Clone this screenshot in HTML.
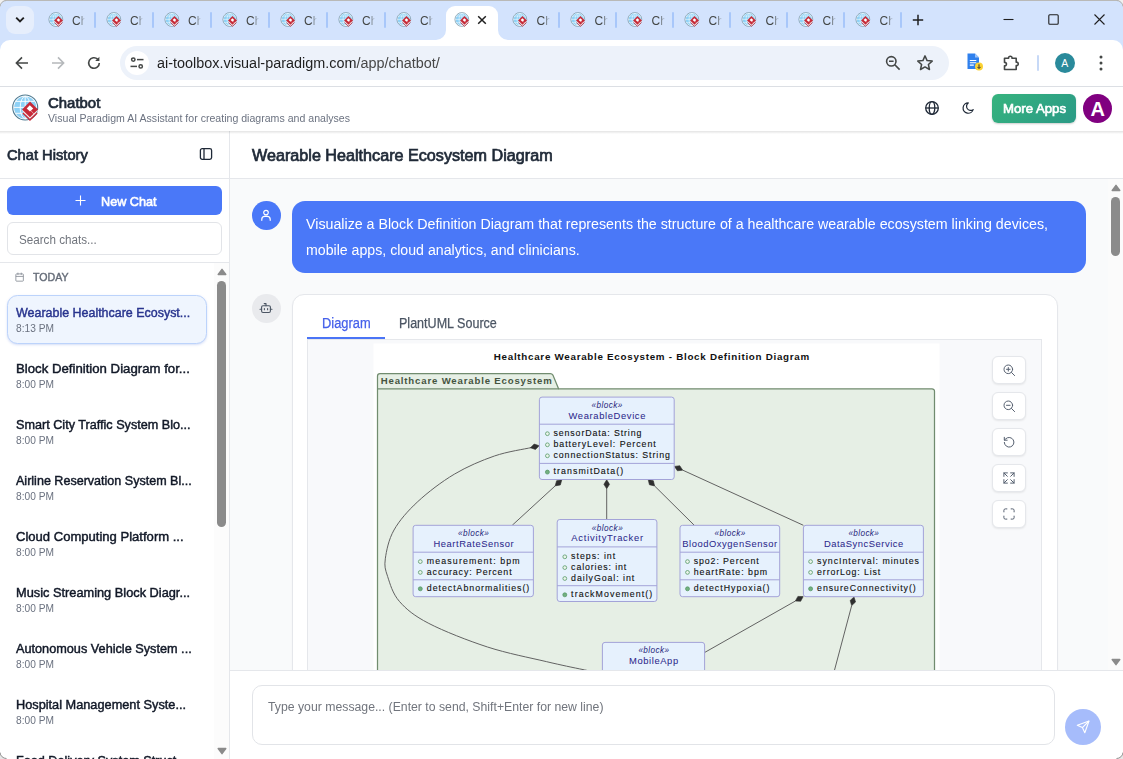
<!DOCTYPE html>
<html>
<head>
<meta charset="utf-8">
<title>Chatbot</title>
<style>
*{box-sizing:border-box;margin:0;padding:0}
html,body{width:1123px;height:759px;overflow:hidden;background:#fff}
body{font-family:"Liberation Sans",sans-serif;position:relative;color:#1f2937}
.abs{position:absolute}
.t{position:absolute;white-space:nowrap;line-height:1}
/* chrome */
#tabstrip{position:absolute;left:0;top:0;width:1123px;height:54px;background:#d3e3fd}
#toolbar{position:absolute;left:0;top:40px;width:1123px;height:46px;background:#fff;border-radius:10px 10px 0 0}
#tbline{position:absolute;left:0;top:86px;width:1123px;height:1px;background:#dcdfe4}
.sep{position:absolute;top:12px;width:2px;height:16px;background:#a8c7fa;border-radius:1px}
.tabtxt{position:absolute;top:13.800px;font-size:12px;line-height:14px;color:#444746;width:13px;overflow:hidden;white-space:nowrap;-webkit-mask-image:linear-gradient(90deg,#000 55%,transparent 100%);mask-image:linear-gradient(90deg,#000 55%,transparent 100%)}
.fav{position:absolute;top:12px;width:16px;height:16px}
#omni{position:absolute;left:120px;top:46px;width:829px;height:34px;border-radius:17px;background:#edf2fa}
/* app */
#apphdr{position:absolute;left:0;top:87px;width:1123px;height:43.500px;background:#fff}
#sidebar{position:absolute;left:0;top:131px;width:230px;height:628px;background:#fff;border-right:1px solid #e5e7eb}
#main{position:absolute;left:230px;top:131px;width:893px;height:628px;background:#f9fafb}
.item-t{position:absolute;left:16px;font-size:13px;font-weight:bold;color:#111827;white-space:nowrap;line-height:1}
.item-s{position:absolute;left:16px;font-size:10.5px;color:#6b7280;white-space:nowrap;line-height:1}
</style>
</head>
<body>
<svg width="0" height="0" style="position:absolute">
<defs>
<symbol id="fav" viewBox="0 0 29 29">
  <circle cx="14.2" cy="13.55" r="12.5" fill="#fff" stroke="#4f7a90" stroke-width="1.1"/>
  <circle cx="14.2" cy="13.55" r="11.1" fill="#8ed1f6"/>
  <g stroke="#fff" stroke-width="0.9" fill="none">
    <ellipse cx="14.2" cy="13.55" rx="5" ry="11.1"/>
    <path d="M14.2 2.4v22.300M3 13.400h22.400M4.800 7.400h18.800M4.800 19.300h18.800"/>
  </g>
  <path d="M11.900 19 18.970 25.800 26.100 19" fill="none" stroke="#c62a38" stroke-width="1.6"/>
  <path d="M18.970 9.040 27.040 16.800 18.970 24.400 11.060 16.800z" fill="#fbeff0"/>
  <path d="M18.970 7.400 27.040 15.400 18.970 23.200 11.060 15.400z" fill="#c62a38"/>
  <path d="M15.700 14.400 18.800 11.200 22.200 14.400 19 17.600z" fill="#fff"/>
  <path d="M19.600 16.300 22.900 20" stroke="#fff" stroke-width="0.5"/>
</symbol>
</defs>
</svg>
<!-- ============ CHROME ============ -->
<div id="tabstrip">
<div class="abs" style="left:6px;top:6px;width:28px;height:28px;border-radius:9px;background:#e6eefc"></div>
<svg class="abs" style="left:14px;top:15px" width="12" height="10" viewBox="0 0 12 10"><path d="M2.2 2.6 6 6.4 9.8 2.6" fill="none" stroke="#1f1f1f" stroke-width="1.9"/></svg>
<svg class="fav" style="left:47.6px"><use href="#fav"/></svg>
<div class="tabtxt" style="left:72px">Ch</div>
<svg class="fav" style="left:105.6px"><use href="#fav"/></svg>
<div class="tabtxt" style="left:130px">Ch</div>
<svg class="fav" style="left:163.6px"><use href="#fav"/></svg>
<div class="tabtxt" style="left:188px">Ch</div>
<svg class="fav" style="left:221.6px"><use href="#fav"/></svg>
<div class="tabtxt" style="left:246px">Ch</div>
<svg class="fav" style="left:279.6px"><use href="#fav"/></svg>
<div class="tabtxt" style="left:304px">Ch</div>
<svg class="fav" style="left:337.6px"><use href="#fav"/></svg>
<div class="tabtxt" style="left:362px">Ch</div>
<svg class="fav" style="left:395.6px"><use href="#fav"/></svg>
<div class="tabtxt" style="left:420px">Ch</div>
<svg class="fav" style="left:512.1px"><use href="#fav"/></svg>
<div class="tabtxt" style="left:536.5px">Ch</div>
<svg class="fav" style="left:570.1px"><use href="#fav"/></svg>
<div class="tabtxt" style="left:594.5px">Ch</div>
<svg class="fav" style="left:627.1px"><use href="#fav"/></svg>
<div class="tabtxt" style="left:651.5px">Ch</div>
<svg class="fav" style="left:684.1px"><use href="#fav"/></svg>
<div class="tabtxt" style="left:708.5px">Ch</div>
<svg class="fav" style="left:741.1px"><use href="#fav"/></svg>
<div class="tabtxt" style="left:765.5px">Ch</div>
<svg class="fav" style="left:798.1px"><use href="#fav"/></svg>
<div class="tabtxt" style="left:822.5px">Ch</div>
<svg class="fav" style="left:855.1px"><use href="#fav"/></svg>
<div class="tabtxt" style="left:879.5px">Ch</div>
<div class="sep" style="left:94px"></div>
<div class="sep" style="left:152px"></div>
<div class="sep" style="left:210px"></div>
<div class="sep" style="left:268px"></div>
<div class="sep" style="left:326px"></div>
<div class="sep" style="left:384px"></div>
<div class="sep" style="left:558px"></div>
<div class="sep" style="left:615px"></div>
<div class="sep" style="left:672px"></div>
<div class="sep" style="left:729px"></div>
<div class="sep" style="left:786px"></div>
<div class="sep" style="left:843px"></div>
<div class="sep" style="left:900px"></div>
<div class="abs" style="left:446px;top:6px;width:52px;height:34px;background:#fff;border-radius:9px 9px 0 0"></div>
<svg class="abs" style="left:436px;top:30px" width="10" height="10" viewBox="0 0 10 10"><path d="M10 0V10H0A10 10 0 0 0 10 0z" fill="#fff"/></svg>
<svg class="abs" style="left:498px;top:30px" width="10" height="10" viewBox="0 0 10 10"><path d="M0 0V10H10A10 10 0 0 1 0 0z" fill="#fff"/></svg>
<svg class="fav" style="left:453.600px"><use href="#fav"/></svg>
<svg class="abs" style="left:477px;top:15px" width="10" height="10" viewBox="0 0 10 10"><path d="M1.2 1.2 8.8 8.8M8.8 1.2 1.2 8.8" stroke="#1f1f1f" stroke-width="1.5" fill="none"/></svg>
<svg class="abs" style="left:912px;top:14px" width="12" height="12" viewBox="0 0 12 12"><path d="M6 .8v10.4M.8 6h10.4" stroke="#1f1f1f" stroke-width="1.5" fill="none"/></svg>
<svg class="abs" style="left:1003px;top:14px" width="11" height="11" viewBox="0 0 11 11"><path d="M.5 5.5h10" stroke="#1f1f1f" stroke-width="1.1"/></svg>
<svg class="abs" style="left:1048px;top:14px" width="11" height="11" viewBox="0 0 11 11"><rect x=".8" y=".8" width="9.4" height="9.4" rx="1" fill="none" stroke="#1f1f1f" stroke-width="1.1"/></svg>
<svg class="abs" style="left:1094px;top:14px" width="11" height="11" viewBox="0 0 11 11"><path d="M.5.5l10 10M10.500 .5l-10 10" stroke="#1f1f1f" stroke-width="1.1" fill="none"/></svg>
</div>
<div id="toolbar"></div><div id="tbline"></div>
<svg class="abs" style="left:14px;top:55px" width="16" height="16" viewBox="0 0 16 16"><path d="M14 8H2.6M8 2.4 2.4 8 8 13.600" fill="none" stroke="#444746" stroke-width="1.6"/></svg>
<svg class="abs" style="left:50px;top:55px" width="16" height="16" viewBox="0 0 16 16"><path d="M2 8h11.400M8 2.400 13.600 8 8 13.600" fill="none" stroke="#b5b8bb" stroke-width="1.6"/></svg>
<svg class="abs" style="left:86px;top:55px" width="16" height="16" viewBox="0 0 16 16"><path d="M13.300 8A5.300 5.300 0 1 1 11.600 4.100" fill="none" stroke="#444746" stroke-width="1.6"/><path d="M13.400 1.800v4.200H9.200z" fill="#444746"/></svg>
<div id="omni"></div>
<div class="abs" style="left:125px;top:51px;width:24px;height:24px;border-radius:12px;background:#fff"></div>
<svg class="abs" style="left:129px;top:55px" width="16" height="16" viewBox="0 0 16 16"><g fill="none" stroke="#444746" stroke-width="1.5"><circle cx="4.300" cy="4.600" r="1.700"/><path d="M8 4.600h6.500"/><circle cx="11.700" cy="11.400" r="1.700"/><path d="M1.500 11.400H8"/></g></svg>
<div class="t" id="url" style="left:156.8px;top:56.20px;font-size:14px;transform:scaleX(1.0294);transform-origin:0 50%;color:#1f1f1f;">ai-toolbox.visual-paradigm.com<span style="color:#474747">/app/chatbot/</span></div>
<svg class="abs" style="left:884px;top:54px" width="18" height="18" viewBox="0 0 18 18"><g fill="none" stroke="#444746" stroke-width="1.6"><circle cx="7.300" cy="7.300" r="4.700"/><path d="M10.800 10.800 15.600 15.600M5 7.300h4.600"/></g></svg>
<svg class="abs" style="left:916px;top:53.700px" width="18" height="18" viewBox="0 0 18 18"><path d="M9 1.900l2.100 4.700 5.100.5-3.800 3.400 1.100 5L9 12.900 4.500 15.500l1.100-5L1.800 7.100l5.100-.5z" fill="none" stroke="#444746" stroke-width="1.5" stroke-linejoin="round"/></svg>
<svg class="abs" style="left:965px;top:52px" width="20" height="20" viewBox="0 0 20 20"><path d="M2.500 1.500h7.500l4 4v11.500h-11.500z" fill="#2f80ed"/><path d="M10 1.500v4h4z" fill="#9cc2f7"/><path d="M4.800 8.500h6.500M4.800 10.800h6.500M4.800 13.100h4" stroke="#fff" stroke-width="1.100"/><circle cx="14" cy="14.500" r="4" fill="#fbd234"/><path d="M14 12.300v4M12.400 14.900l1.600 1.600 1.600-1.600" fill="none" stroke="#333" stroke-width="1"/></svg>
<svg class="abs" style="left:1002px;top:53px" width="19" height="19" viewBox="0 0 19 19"><path d="M2.500 5.200h4.100c-.5-2.600 3.900-2.600 3.400 0h4.200v4c2.700-.5 2.700 3.900 0 3.400v3.900H2.500v-3.700c2.600.4 2.600-3.800 0-3.400z" fill="none" stroke="#444746" stroke-width="1.6" stroke-linejoin="round"/></svg>
<div class="abs" style="left:1037px;top:55px;width:2px;height:16px;background:#c7d9f7;border-radius:1px"></div>
<div class="abs" style="left:1055px;top:53px;width:20px;height:20px;border-radius:10px;background:#2a8a9b"></div>
<div class="t" style="left:1061.300px;top:57.500px;font-size:10.500px;color:#fff">A</div>
<svg class="abs" style="left:1099px;top:54px" width="4" height="18" viewBox="0 0 4 18"><circle cx="2" cy="3" r="1.500" fill="#444746"/><circle cx="2" cy="9" r="1.500" fill="#444746"/><circle cx="2" cy="15" r="1.500" fill="#444746"/></svg>
<div class="abs" style="left:0;top:0;width:1123px;height:1px;background:#b9b9b7"></div>
<svg class="abs" style="left:0;top:0" width="7" height="7" viewBox="0 0 7 7"><path d="M0 0h7A7 7 0 0 0 0 7z" fill="#f0f0f0"/><path d="M0 6.500A6.500 6.500 0 0 1 6.500 .500" fill="none" stroke="#b0b0ae" stroke-width="1"/></svg>
<svg class="abs" style="left:1116px;top:0" width="7" height="7" viewBox="0 0 7 7"><path d="M7 0H0A7 7 0 0 1 7 7z" fill="#f0f0f0"/><path d="M7 6.500A6.500 6.500 0 0 0 .500 .500" fill="none" stroke="#b0b0ae" stroke-width="1"/></svg>
<!-- ============ APP HEADER ============ -->
<div id="sidebar"></div>
<div id="main"></div>
<div id="apphdr"></div>
<svg class="abs" style="left:11px;top:94px" width="29" height="29"><use href="#fav"/></svg>
<div class="t" id="h_title" style="left:48px;top:95.75px;font-size:14.5px;transform:scaleX(1.0296);transform-origin:0 50%;-webkit-text-stroke:0.700px #1f2937;color:#1f2937;">Chatbot</div>
<div class="t" id="h_sub" style="left:48px;top:112.95px;font-size:10.5px;transform:scaleX(1.0073);transform-origin:0 50%;color:#6b7280;">Visual Paradigm AI Assistant for creating diagrams and analyses</div>
<svg class="abs" style="left:924px;top:100px" width="16" height="16" viewBox="0 0 16 16"><g fill="none" stroke="#1f2937" stroke-width="1.300"><circle cx="8" cy="8" r="6.300"/><ellipse cx="8" cy="8" rx="2.800" ry="6.300"/><path d="M1.700 8h12.600"/></g></svg>
<svg class="abs" style="left:961px;top:101.200px" width="14" height="14" viewBox="0 0 16 16"><path d="M8.300 2.200a5.900 5.900 0 1 0 5.600 7.700 4.700 4.700 0 0 1-5.600-7.700z" fill="none" stroke="#1f2937" stroke-width="1.400" stroke-linejoin="round"/></svg>
<div class="abs" style="left:992px;top:94px;width:84px;height:29px;border-radius:6px;background:linear-gradient(135deg,#36b37e,#2b9a86);box-shadow:0 1px 2px rgba(0,0,0,.2)"></div>
<div class="t" id="moreapps" style="left:1002.5px;top:102.00px;font-size:13px;transform:scaleX(1.0136);transform-origin:0 50%;-webkit-text-stroke:0.650px #fff;color:#fff;">More Apps</div>
<div class="abs" style="left:1083px;top:94px;width:29px;height:29px;border-radius:15px;background:#800080"></div>
<div class="t" style="left:1090.500px;top:98.500px;font-size:20px;font-weight:bold;color:#fff">A</div>
<!-- ============ SIDEBAR ============ -->
<div class="t" id="sb_title" style="left:7.4px;top:147.10px;font-size:15px;transform:scaleX(0.9790);transform-origin:0 50%;-webkit-text-stroke:0.700px #1f2937;color:#1f2937;">Chat History</div>
<svg class="abs" style="left:199px;top:147px" width="14" height="14" viewBox="0 0 14 14"><rect x="1.400" y="1.600" width="11.200" height="10.800" rx="1.800" fill="none" stroke="#1f2937" stroke-width="1.300"/><path d="M5 1.600v10.800" stroke="#1f2937" stroke-width="1.300"/></svg>
<div class="abs" style="left:0;top:178px;width:229px;height:1px;background:#e5e7eb"></div>
<div class="abs" style="left:7px;top:186px;width:215px;height:29px;border-radius:6px;background:#4a78f8"></div>
<svg class="abs" style="left:75px;top:195px" width="11" height="11" viewBox="0 0 11 11"><path d="M5.500 .500v10M.500 5.500h10" stroke="#fff" stroke-width="1.100"/></svg>
<div class="t" id="newchat" style="left:100.5px;top:194.80px;font-size:13px;transform:scaleX(0.9724);transform-origin:0 50%;-webkit-text-stroke:0.600px #fff;color:#fff;">New Chat</div>
<div class="abs" style="left:7px;top:222px;width:215px;height:33px;border-radius:6px;background:#fff;border:1px solid #e2e4e8"></div>
<div class="t" id="search" style="left:19px;top:233.85px;font-size:12.5px;transform:scaleX(0.9319);transform-origin:0 50%;color:#71757d;">Search chats...</div>
<div class="abs" style="left:0;top:262px;width:229px;height:1px;background:#e5e7eb"></div>
<svg class="abs" style="left:14.500px;top:272px" width="9.200" height="10" viewBox="0 0 11 12"><g fill="none" stroke="#7f858f" stroke-width="0.950"><rect x="1" y="2.300" width="9" height="8.700" rx="0.800"/><path d="M1 5.300h9M3.500 .800v2.600M7.500 .800v2.600"/></g></svg>
<div class="t" id="today" style="left:32.7px;top:271.50px;font-size:11px;transform:scaleX(0.9650);transform-origin:0 50%;color:#656c78;-webkit-text-stroke:0.400px #656c78;">TODAY</div>
<div class="abs" style="left:7px;top:295px;width:200px;height:49px;border-radius:10.500px;background:#eff5fe;border:1px solid #bcd3fb;box-shadow:0 1px 2.500px rgba(60,100,220,.22)"></div>
<div class="t" id="it0" style="left:15.6px;top:306.00px;font-size:13px;transform:scaleX(0.9580);transform-origin:0 50%;-webkit-text-stroke:0.450px #28348e;color:#28348e;">Wearable Healthcare Ecosyst...</div>
<div class="t" id="tm0" style="left:15.6px;top:322.95px;font-size:10.5px;transform:scaleX(0.9691);transform-origin:0 50%;color:#6b7280;">8:13 PM</div>
<div class="t" id="it1" style="left:15.6px;top:362.00px;font-size:13px;transform:scaleX(1.0150);transform-origin:0 50%;-webkit-text-stroke:0.450px #111827;color:#111827;">Block Definition Diagram for...</div>
<div class="t" id="tm1" style="left:15.6px;top:378.95px;font-size:10.5px;transform:scaleX(0.9691);transform-origin:0 50%;color:#6b7280;">8:00 PM</div>
<div class="t" id="it2" style="left:15.6px;top:418.00px;font-size:13px;transform:scaleX(0.9719);transform-origin:0 50%;-webkit-text-stroke:0.450px #111827;color:#111827;">Smart City Traffic System Blo...</div>
<div class="t" id="tm2" style="left:15.6px;top:434.95px;font-size:10.5px;transform:scaleX(0.9691);transform-origin:0 50%;color:#6b7280;">8:00 PM</div>
<div class="t" id="it3" style="left:15.6px;top:474.00px;font-size:13px;transform:scaleX(0.9650);transform-origin:0 50%;-webkit-text-stroke:0.450px #111827;color:#111827;">Airline Reservation System Bl...</div>
<div class="t" id="tm3" style="left:15.6px;top:490.95px;font-size:10.5px;transform:scaleX(0.9691);transform-origin:0 50%;color:#6b7280;">8:00 PM</div>
<div class="t" id="it4" style="left:15.6px;top:530.00px;font-size:13px;transform:scaleX(1.0042);transform-origin:0 50%;-webkit-text-stroke:0.450px #111827;color:#111827;">Cloud Computing Platform ...</div>
<div class="t" id="tm4" style="left:15.6px;top:546.95px;font-size:10.5px;transform:scaleX(0.9691);transform-origin:0 50%;color:#6b7280;">8:00 PM</div>
<div class="t" id="it5" style="left:15.6px;top:586.00px;font-size:13px;transform:scaleX(0.9835);transform-origin:0 50%;-webkit-text-stroke:0.450px #111827;color:#111827;">Music Streaming Block Diagr...</div>
<div class="t" id="tm5" style="left:15.6px;top:602.95px;font-size:10.5px;transform:scaleX(0.9691);transform-origin:0 50%;color:#6b7280;">8:00 PM</div>
<div class="t" id="it6" style="left:15.6px;top:642.00px;font-size:13px;transform:scaleX(0.9765);transform-origin:0 50%;-webkit-text-stroke:0.450px #111827;color:#111827;">Autonomous Vehicle System ...</div>
<div class="t" id="tm6" style="left:15.6px;top:658.95px;font-size:10.5px;transform:scaleX(0.9691);transform-origin:0 50%;color:#6b7280;">8:00 PM</div>
<div class="t" id="it7" style="left:15.6px;top:698.00px;font-size:13px;transform:scaleX(0.9803);transform-origin:0 50%;-webkit-text-stroke:0.450px #111827;color:#111827;">Hospital Management Syste...</div>
<div class="t" id="tm7" style="left:15.6px;top:714.95px;font-size:10.5px;transform:scaleX(0.9691);transform-origin:0 50%;color:#6b7280;">8:00 PM</div>
<div class="t" id="it8" style="left:15.6px;top:754.00px;font-size:13px;transform:scaleX(0.9734);transform-origin:0 50%;-webkit-text-stroke:0.450px #111827;color:#111827;">Food Delivery System Struct...</div>
<div class="t" id="tm8" style="left:15.6px;top:770.95px;font-size:10.5px;transform:scaleX(0.9691);transform-origin:0 50%;color:#6b7280;">8:00 PM</div>
<div class="abs" style="left:214px;top:263px;width:15px;height:496px;background:#fcfcfc"></div>
<svg class="abs" style="left:216.500px;top:267.500px" width="10" height="8" viewBox="0 0 10 8"><path d="M5 1.300 8.800 6.500H1.200z" fill="#8b8b8b" stroke="#8b8b8b" stroke-width="1.400" stroke-linejoin="round"/></svg>
<div class="abs" style="left:217px;top:281px;width:9px;height:246px;border-radius:4.500px;background:#8b8b8b"></div>
<svg class="abs" style="left:216.500px;top:747px" width="10" height="8" viewBox="0 0 10 8"><path d="M5 6.700 8.800 1.500H1.200z" fill="#8b8b8b" stroke="#8b8b8b" stroke-width="1.400" stroke-linejoin="round"/></svg>
<!-- ============ MAIN ============ -->
<div class="abs" style="left:230px;top:131px;width:893px;height:47px;background:#fff"></div>
<div class="abs" style="left:230px;top:178px;width:893px;height:1px;background:#e5e7eb"></div>
<div class="t" id="m_title" style="left:252px;top:147.70px;font-size:15.6px;transform:scaleX(1.0364);transform-origin:0 50%;-webkit-text-stroke:0.700px #1f2937;color:#1f2937;">Wearable Healthcare Ecosystem Diagram</div>
<div class="abs" style="left:252px;top:200.800px;width:28.800px;height:28.800px;border-radius:50%;background:#4a78f8"></div>
<svg class="abs" style="left:259.400px;top:208.200px" width="14" height="14" viewBox="0 0 14 14"><g fill="none" stroke="#fff" stroke-width="1.200" stroke-linecap="round"><circle cx="7" cy="4.600" r="2.300"/><path d="M2.800 12.300v-1a3 3 0 0 1 3-3h2.400a3 3 0 0 1 3 3v1"/></g></svg>
<div class="abs" style="left:292px;top:201px;width:794px;height:71.700px;border-radius:13px;background:#4a78f8"></div>
<div class="t" id="u1" style="left:306.1px;top:218.10px;font-size:13.8px;transform:scaleX(1.0308);transform-origin:0 50%;color:#fff;">Visualize a Block Definition Diagram that represents the structure of a healthcare wearable ecosystem linking devices,</div>
<div class="t" id="u2" style="left:306.1px;top:244.10px;font-size:13.8px;transform:scaleX(1.0255);transform-origin:0 50%;color:#fff;">mobile apps, cloud analytics, and clinicians.</div>
<div class="abs" style="left:252px;top:293.800px;width:28.800px;height:28.800px;border-radius:50%;background:#e9eaed"></div>
<svg class="abs" style="left:259.400px;top:301.200px" width="14" height="14" viewBox="0 0 14 14"><g fill="none" stroke="#4b5563" stroke-width="1.100" stroke-linecap="round" stroke-linejoin="round"><rect x="2.600" y="4.700" width="8.800" height="6.800" rx="1.400"/><path d="M7 4.700V2.600H5.200M1 8.200h1.600M11.400 8.200H13M5.400 7.600v1.200M8.600 7.600v1.200"/></g></svg>
<div class="abs" style="left:292px;top:294px;width:766px;height:400px;border-radius:12px;background:#fff;border:1px solid #e5e7eb;box-shadow:0 1px 2px rgba(0,0,0,.04)"></div>
<div class="t" id="tab1" style="left:321.7px;top:315.50px;font-size:14px;transform:scaleX(0.9186);transform-origin:0 50%;color:#4560ea;-webkit-text-stroke:0.250px #4560ea;">Diagram</div>
<div class="t" id="tab2" style="left:399.2px;top:316.00px;font-size:14px;transform:scaleX(0.8956);transform-origin:0 50%;color:#4b5563;-webkit-text-stroke:0.250px #4b5563;">PlantUML Source</div>
<div class="abs" style="left:307px;top:339px;width:735px;height:1px;background:#e5e7eb"></div>
<div class="abs" style="left:307px;top:337.200px;width:78px;height:1.800px;background:#4a74f6"></div>
<div class="abs" style="left:307px;top:340px;width:735px;height:340px;background:#f8f9fb;border:1px solid #e5e7eb;border-top:0"></div>
<!-- ============ DIAGRAM ============ -->
<svg class="abs" style="left:308px;top:340px" width="733" height="330" viewBox="308 340 733 330" font-family="Liberation Sans, sans-serif">
<rect x="373.5" y="343.5" width="566" height="340" fill="#fff"/>
<text x="493.80" y="360.03" font-size="9.8" fill="#111" stroke="#111" stroke-width="0" textLength="315.40" lengthAdjust="spacing" font-weight="bold">Healthcare Wearable Ecosystem - Block Definition Diagram</text>
<path d="M377.5 388.8V376.1a2.500 2.500 0 0 1 2.500-2.500H550.300a3 3 0 0 1 2.600 1.500L558.600 388.800H932a2.500 2.500 0 0 1 2.500 2.500V700H377.500z" fill="#e6efe5" stroke="#718c6f" stroke-width="1.250"/>
<path d="M377.5 388.8H558.600" stroke="#718c6f" stroke-width="1.250"/>
<text x="380.70" y="384.16" font-size="9.6" fill="#45543f" stroke="#45543f" stroke-width="0" textLength="171.00" lengthAdjust="spacing" font-weight="bold">Healthcare Wearable Ecosystem</text>
<path d="M555.17 485.88L512.20 525.30" stroke="#626262" stroke-width="1" fill="none"/>
<polygon points="561.80,479.80 556.59,480.78 555.17,485.88 560.38,484.91" fill="#2f2f2f" stroke="#2f2f2f" stroke-width="0.600"/>
<path d="M606.70 488.80L606.70 519.50" stroke="#626262" stroke-width="1" fill="none"/>
<polygon points="606.70,479.80 603.90,484.30 606.70,488.80 609.50,484.30" fill="#2f2f2f" stroke="#2f2f2f" stroke-width="0.600"/>
<path d="M654.59 485.94L694.30 525.30" stroke="#626262" stroke-width="1" fill="none"/>
<polygon points="648.20,479.60 649.42,484.76 654.59,485.94 653.37,480.78" fill="#2f2f2f" stroke="#2f2f2f" stroke-width="0.600"/>
<path d="M682.69 470.14L803.40 525.30" stroke="#626262" stroke-width="1" fill="none"/>
<polygon points="674.50,466.40 677.43,470.82 682.69,470.14 679.76,465.72" fill="#2f2f2f" stroke="#2f2f2f" stroke-width="0.600"/>
<path d="M795.37 601.04L704.60 652.50" stroke="#626262" stroke-width="1" fill="none"/>
<polygon points="803.20,596.60 797.90,596.38 795.37,601.04 800.67,601.26" fill="#2f2f2f" stroke="#2f2f2f" stroke-width="0.600"/>
<path d="M851.68 605.60L834.00 672.00" stroke="#626262" stroke-width="1" fill="none"/>
<polygon points="854.00,596.90 850.14,600.53 851.68,605.60 855.55,601.97" fill="#2f2f2f" stroke="#2f2f2f" stroke-width="0.600"/>
<path d="M531.20 447.60C525.07 449.00 507.22 451.57 494.40 456.00C481.58 460.43 467.07 466.60 454.30 474.20C441.53 481.80 427.85 492.30 417.80 501.60C407.75 510.90 399.42 520.47 394.00 530.00C388.58 539.53 386.37 551.07 385.30 558.80C384.23 566.53 385.25 569.30 387.60 576.40C389.95 583.50 392.53 593.57 399.40 601.40C406.27 609.23 414.12 615.80 428.80 623.40C443.48 631.00 467.92 640.63 487.50 647.00C507.08 653.37 530.13 657.78 546.30 661.60C562.47 665.42 571.38 667.17 584.50 669.90C597.62 672.63 618.25 676.65 625.00 678.00" stroke="#626262" stroke-width="1" fill="none"/>
<polygon points="539.20,445.70 534.17,444.02 530.44,447.78 535.47,449.46" fill="#2f2f2f" stroke="#2f2f2f" stroke-width="0.600"/>
<rect x="539.4" y="397.1" width="134.80" height="82.40" rx="2.600" fill="#e6f1fd" stroke="#a3a3d8" stroke-width="1"/>
<path d="M539.4 424.2H674.2" stroke="#a3a3d8" stroke-width="1"/>
<path d="M539.4 463.4H674.2" stroke="#a3a3d8" stroke-width="1"/>
<text x="591.50" y="407.99" font-size="8.2" fill="#26267a" stroke="#26267a" stroke-width="0" textLength="30.80" lengthAdjust="spacing" font-style="italic">&#171;block&#187;</text>
<text x="568.50" y="418.80" font-size="9.4" fill="#2e2a8c" stroke="#2e2a8c" stroke-width="0.05" textLength="76.90" lengthAdjust="spacing" >WearableDevice</text>
<text x="553.50" y="435.99" font-size="8.8" fill="#111" stroke="#111" stroke-width="0.12" textLength="87.90" lengthAdjust="spacing" >sensorData: String</text>
<circle cx="547.4" cy="433.70" r="1.900" fill="#eaf4ea" stroke="#4f9460" stroke-width="0.750"/>
<text x="553.50" y="447.09" font-size="8.8" fill="#111" stroke="#111" stroke-width="0.12" textLength="102.20" lengthAdjust="spacing" >batteryLevel: Percent</text>
<circle cx="547.4" cy="444.80" r="1.900" fill="#eaf4ea" stroke="#4f9460" stroke-width="0.750"/>
<text x="553.50" y="458.09" font-size="8.8" fill="#111" stroke="#111" stroke-width="0.12" textLength="116.40" lengthAdjust="spacing" >connectionStatus: String</text>
<circle cx="547.4" cy="455.80" r="1.900" fill="#eaf4ea" stroke="#4f9460" stroke-width="0.750"/>
<text x="553.50" y="474.19" font-size="8.8" fill="#111" stroke="#111" stroke-width="0.12" textLength="69.80" lengthAdjust="spacing" >transmitData()</text>
<circle cx="547.4" cy="472.10" r="2" fill="#73b081" stroke="#4f9460" stroke-width="0.700"/>
<rect x="413.1" y="525.3" width="120.30" height="71.40" rx="2.600" fill="#e6f1fd" stroke="#a3a3d8" stroke-width="1"/>
<path d="M413.1 552.2H533.4" stroke="#a3a3d8" stroke-width="1"/>
<path d="M413.1 579.8H533.4" stroke="#a3a3d8" stroke-width="1"/>
<text x="458.00" y="536.29" font-size="8.2" fill="#26267a" stroke="#26267a" stroke-width="0" textLength="30.80" lengthAdjust="spacing" font-style="italic">&#171;block&#187;</text>
<text x="433.40" y="547.10" font-size="9.4" fill="#2e2a8c" stroke="#2e2a8c" stroke-width="0.05" textLength="80.30" lengthAdjust="spacing" >HeartRateSensor</text>
<text x="426.80" y="563.89" font-size="8.8" fill="#111" stroke="#111" stroke-width="0.12" textLength="92.90" lengthAdjust="spacing" >measurement: bpm</text>
<circle cx="420.3" cy="561.60" r="1.900" fill="#eaf4ea" stroke="#4f9460" stroke-width="0.750"/>
<text x="426.80" y="574.69" font-size="8.8" fill="#111" stroke="#111" stroke-width="0.12" textLength="84.80" lengthAdjust="spacing" >accuracy: Percent</text>
<circle cx="420.3" cy="572.40" r="1.900" fill="#eaf4ea" stroke="#4f9460" stroke-width="0.750"/>
<text x="426.80" y="590.89" font-size="8.8" fill="#111" stroke="#111" stroke-width="0.12" textLength="102.50" lengthAdjust="spacing" >detectAbnormalities()</text>
<circle cx="420.3" cy="588.80" r="2" fill="#73b081" stroke="#4f9460" stroke-width="0.700"/>
<rect x="557.2" y="519.5" width="99.70" height="82.00" rx="2.600" fill="#e6f1fd" stroke="#a3a3d8" stroke-width="1"/>
<path d="M557.2 546.9H656.9" stroke="#a3a3d8" stroke-width="1"/>
<path d="M557.2 585.7H656.9" stroke="#a3a3d8" stroke-width="1"/>
<text x="591.80" y="531.19" font-size="8.2" fill="#26267a" stroke="#26267a" stroke-width="0" textLength="30.90" lengthAdjust="spacing" font-style="italic">&#171;block&#187;</text>
<text x="571.30" y="541.10" font-size="9.4" fill="#2e2a8c" stroke="#2e2a8c" stroke-width="0.05" textLength="71.80" lengthAdjust="spacing" >ActivityTracker</text>
<text x="571.10" y="559.09" font-size="8.8" fill="#111" stroke="#111" stroke-width="0.12" textLength="44.10" lengthAdjust="spacing" >steps: int</text>
<circle cx="564.8" cy="556.80" r="1.900" fill="#eaf4ea" stroke="#4f9460" stroke-width="0.750"/>
<text x="571.10" y="569.89" font-size="8.8" fill="#111" stroke="#111" stroke-width="0.12" textLength="55.20" lengthAdjust="spacing" >calories: int</text>
<circle cx="564.8" cy="567.60" r="1.900" fill="#eaf4ea" stroke="#4f9460" stroke-width="0.750"/>
<text x="571.10" y="580.79" font-size="8.8" fill="#111" stroke="#111" stroke-width="0.12" textLength="63.10" lengthAdjust="spacing" >dailyGoal: int</text>
<circle cx="564.8" cy="578.50" r="1.900" fill="#eaf4ea" stroke="#4f9460" stroke-width="0.750"/>
<text x="571.10" y="596.89" font-size="8.8" fill="#111" stroke="#111" stroke-width="0.12" textLength="81.20" lengthAdjust="spacing" >trackMovement()</text>
<circle cx="564.8" cy="594.80" r="2" fill="#73b081" stroke="#4f9460" stroke-width="0.700"/>
<rect x="680" y="525.3" width="99.70" height="71.40" rx="2.600" fill="#e6f1fd" stroke="#a3a3d8" stroke-width="1"/>
<path d="M680 552.2H779.7" stroke="#a3a3d8" stroke-width="1"/>
<path d="M680 579.8H779.7" stroke="#a3a3d8" stroke-width="1"/>
<text x="714.60" y="536.29" font-size="8.2" fill="#26267a" stroke="#26267a" stroke-width="0" textLength="30.60" lengthAdjust="spacing" font-style="italic">&#171;block&#187;</text>
<text x="682.20" y="547.10" font-size="9.4" fill="#2e2a8c" stroke="#2e2a8c" stroke-width="0.05" textLength="95.00" lengthAdjust="spacing" >BloodOxygenSensor</text>
<text x="693.70" y="563.89" font-size="8.8" fill="#111" stroke="#111" stroke-width="0.12" textLength="65.10" lengthAdjust="spacing" >spo2: Percent</text>
<circle cx="687.5" cy="561.60" r="1.900" fill="#eaf4ea" stroke="#4f9460" stroke-width="0.750"/>
<text x="693.70" y="574.69" font-size="8.8" fill="#111" stroke="#111" stroke-width="0.12" textLength="73.50" lengthAdjust="spacing" >heartRate: bpm</text>
<circle cx="687.5" cy="572.40" r="1.900" fill="#eaf4ea" stroke="#4f9460" stroke-width="0.750"/>
<text x="693.70" y="590.89" font-size="8.8" fill="#111" stroke="#111" stroke-width="0.12" textLength="75.70" lengthAdjust="spacing" >detectHypoxia()</text>
<circle cx="687.5" cy="588.80" r="2" fill="#73b081" stroke="#4f9460" stroke-width="0.700"/>
<rect x="803.4" y="525.3" width="120.00" height="71.40" rx="2.600" fill="#e6f1fd" stroke="#a3a3d8" stroke-width="1"/>
<path d="M803.4 552.2H923.4" stroke="#a3a3d8" stroke-width="1"/>
<path d="M803.4 579.8H923.4" stroke="#a3a3d8" stroke-width="1"/>
<text x="848.40" y="536.29" font-size="8.2" fill="#26267a" stroke="#26267a" stroke-width="0" textLength="30.50" lengthAdjust="spacing" font-style="italic">&#171;block&#187;</text>
<text x="823.90" y="547.10" font-size="9.4" fill="#2e2a8c" stroke="#2e2a8c" stroke-width="0.05" textLength="79.30" lengthAdjust="spacing" >DataSyncService</text>
<text x="817.10" y="563.89" font-size="8.8" fill="#111" stroke="#111" stroke-width="0.12" textLength="101.90" lengthAdjust="spacing" >syncInterval: minutes</text>
<circle cx="810.6" cy="561.60" r="1.900" fill="#eaf4ea" stroke="#4f9460" stroke-width="0.750"/>
<text x="817.10" y="574.69" font-size="8.8" fill="#111" stroke="#111" stroke-width="0.12" textLength="63.10" lengthAdjust="spacing" >errorLog: List</text>
<circle cx="810.6" cy="572.40" r="1.900" fill="#eaf4ea" stroke="#4f9460" stroke-width="0.750"/>
<text x="817.10" y="590.89" font-size="8.8" fill="#111" stroke="#111" stroke-width="0.12" textLength="98.60" lengthAdjust="spacing" >ensureConnectivity()</text>
<circle cx="810.6" cy="588.80" r="2" fill="#73b081" stroke="#4f9460" stroke-width="0.700"/>
<rect x="602.4" y="642.4" width="102.20" height="57.60" rx="2.600" fill="#e6f1fd" stroke="#a3a3d8" stroke-width="1"/>
<text x="638.40" y="653.19" font-size="8.2" fill="#26267a" stroke="#26267a" stroke-width="0" textLength="30.60" lengthAdjust="spacing" font-style="italic">&#171;block&#187;</text>
<text x="629.10" y="664.10" font-size="9.4" fill="#2e2a8c" stroke="#2e2a8c" stroke-width="0.05" textLength="49.00" lengthAdjust="spacing" >MobileApp</text>
</svg>
<!-- ============ OVERLAYS ============ -->
<div class="abs" style="left:992px;top:356px;width:34px;height:28px;border-radius:6px;background:#fff;border:1px solid #e5e7eb;box-shadow:0 1px 2px rgba(0,0,0,.08)"></div>
<svg class="abs" style="left:1002px;top:363px" width="14" height="14" viewBox="0 0 14 14"><g fill="none" stroke="#566070" stroke-width="1" stroke-linecap="round" stroke-linejoin="round"><circle cx="6.300" cy="6.300" r="4.300"/><path d="M9.500 9.500 12.600 12.600M4.500 6.300h3.600M6.300 4.500v3.600"/></g></svg>
<div class="abs" style="left:992px;top:392px;width:34px;height:28px;border-radius:6px;background:#fff;border:1px solid #e5e7eb;box-shadow:0 1px 2px rgba(0,0,0,.08)"></div>
<svg class="abs" style="left:1002px;top:399px" width="14" height="14" viewBox="0 0 14 14"><g fill="none" stroke="#566070" stroke-width="1" stroke-linecap="round" stroke-linejoin="round"><circle cx="6.300" cy="6.300" r="4.300"/><path d="M9.500 9.500 12.600 12.600M4.500 6.300h3.600"/></g></svg>
<div class="abs" style="left:992px;top:428px;width:34px;height:28px;border-radius:6px;background:#fff;border:1px solid #e5e7eb;box-shadow:0 1px 2px rgba(0,0,0,.08)"></div>
<svg class="abs" style="left:1002px;top:435px" width="14" height="14" viewBox="0 0 14 14"><g fill="none" stroke="#566070" stroke-width="1" stroke-linecap="round" stroke-linejoin="round"><path d="M2.300 7.400a4.800 4.800 0 1 0 1.500-3.600L2.300 5.200"/><path d="M2.300 2.300v2.900h2.900"/></g></svg>
<div class="abs" style="left:992px;top:464px;width:34px;height:28px;border-radius:6px;background:#fff;border:1px solid #e5e7eb;box-shadow:0 1px 2px rgba(0,0,0,.08)"></div>
<svg class="abs" style="left:1002px;top:471px" width="14" height="14" viewBox="0 0 14 14"><g fill="none" stroke="#566070" stroke-width="1" stroke-linecap="round" stroke-linejoin="round"><path d="M8.600 1.900h3.500v3.500M12.100 1.900 8.700 5.300M5.400 12.100H1.900V8.600M1.900 12.100l3.400-3.400M1.900 5.400V1.900h3.500M1.900 1.900l3.400 3.400M12.100 8.600v3.500H8.600M12.100 12.100 8.700 8.700"/></g></svg>
<div class="abs" style="left:992px;top:500px;width:34px;height:28px;border-radius:6px;background:#fff;border:1px solid #e5e7eb;box-shadow:0 1px 2px rgba(0,0,0,.08)"></div>
<svg class="abs" style="left:1002px;top:507px" width="14" height="14" viewBox="0 0 14 14"><g fill="none" stroke="#566070" stroke-width="1" stroke-linecap="round" stroke-linejoin="round"><path d="M1.900 4.900V3.300a1.400 1.400 0 0 1 1.400-1.400h1.600M9.100 1.900h1.600a1.400 1.400 0 0 1 1.400 1.400v1.600M12.100 9.100v1.600a1.400 1.400 0 0 1-1.400 1.400H9.100M4.900 12.100H3.300a1.400 1.400 0 0 1-1.400-1.400V9.100"/></g></svg>
<div class="abs" style="left:0;top:130.500px;width:1123px;height:3px;background:linear-gradient(rgba(0,0,0,.11),rgba(0,0,0,0))"></div>
<div class="abs" style="left:230px;top:670px;width:893px;height:89px;background:#fff;border-top:1px solid #e5e7eb"></div>
<div class="abs" style="left:252px;top:685px;width:803px;height:60px;border-radius:10px;background:#fff;border:1px solid #e2e4e8"></div>
<div class="t" id="ph" style="left:268.3px;top:701.35px;font-size:12.5px;transform:scaleX(0.9805);transform-origin:0 50%;color:#71757d;">Type your message... (Enter to send, Shift+Enter for new line)</div>
<div class="abs" style="left:1065px;top:709px;width:36px;height:36px;border-radius:18px;background:#a6bcfb"></div>
<svg class="abs" style="left:1075px;top:719px" width="16" height="16" viewBox="0 0 16 16"><path d="M14 2 2.300 6.200 7.400 8.600 9.800 13.700z" fill="none" stroke="#fff" stroke-width="1.100" stroke-linejoin="round"/><path d="M14 2 7.400 8.600" stroke="#fff" stroke-width="1.100"/></svg>
<div class="abs" style="left:1108px;top:179px;width:15px;height:491px;background:#fbfbfb"></div>
<svg class="abs" style="left:1110.500px;top:183.500px" width="10" height="8" viewBox="0 0 10 8"><path d="M5 1.300 8.800 6.500H1.200z" fill="#8b8b8b" stroke="#8b8b8b" stroke-width="1.400" stroke-linejoin="round"/></svg>
<div class="abs" style="left:1111px;top:197px;width:9px;height:59px;border-radius:4.500px;background:#8b8b8b"></div>
<svg class="abs" style="left:1110.500px;top:658px" width="10" height="8" viewBox="0 0 10 8"><path d="M5 6.700 8.800 1.500H1.200z" fill="#8b8b8b" stroke="#8b8b8b" stroke-width="1.400" stroke-linejoin="round"/></svg>
<svg class="abs" style="left:0;top:752px" width="7" height="7" viewBox="0 0 7 7"><path d="M0 7h7A7 7 0 0 1 0 0z" fill="#e6e6e6"/><path d="M0 .500A6.500 6.500 0 0 0 6.500 6.500" fill="none" stroke="#8f8f8f" stroke-width="1"/></svg>
<svg class="abs" style="left:1116px;top:752px" width="7" height="7" viewBox="0 0 7 7"><path d="M7 7H0A7 7 0 0 0 7 0z" fill="#e6e6e6"/><path d="M7 .500A6.500 6.500 0 0 1 .500 6.500" fill="none" stroke="#8f8f8f" stroke-width="1"/></svg>
</body>
</html>
